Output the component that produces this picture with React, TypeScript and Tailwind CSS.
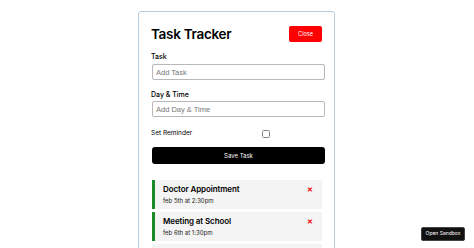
import React from 'react';

interface Task {
  id: number;
  text: string;
  day: string;
}

const tasks: Task[] = [
  { id: 1, text: 'Doctor Appointment', day: 'feb 5th at 2:30pm' },
  { id: 2, text: 'Meeting at School', day: 'feb 6th at 1:30pm' },
];

const font = { fontFamily: 'Inter, "Open Sans", sans-serif' };

export default function App() {
  return (
    <div className="relative w-[474px] h-[248px] overflow-hidden bg-white" style={font}>
      <div className="ml-[138px] mt-[11px] w-[197px] border border-[#b9cde0] rounded-[3px] px-[12px] pt-[14px] pb-4">
        {/* Header */}
        <div className="flex items-center justify-between h-[16px]">
          <h1 className="text-[13.5px] leading-[16px] font-semibold text-black tracking-[-0.3px]">Task Tracker</h1>
          <button className="w-[33px] h-[16px] bg-[#ff0000] text-white text-[5.5px] rounded-[2px]">Close</button>
        </div>

        {/* Form */}
        <div className="mt-[11px]">
          <label className="block text-[7px] leading-[8px] font-medium text-black">Task</label>
          <input
            placeholder="Add Task"
            className="block mt-[3px] ml-[1px] w-[173px] h-[16px] border border-[#b8b8b8] rounded-[2px] px-[3px] text-[7.5px] placeholder:text-[#777]"
            style={{ fontFamily: '"Liberation Sans", Arial, sans-serif' }}
          />
        </div>
        <div className="mt-[11px]">
          <label className="block text-[7px] leading-[8px] font-medium text-black">Day &amp; Time</label>
          <input
            placeholder="Add Day & Time"
            className="block mt-[2px] ml-[1px] w-[173px] h-[16px] border border-[#b8b8b8] rounded-[2px] px-[3px] text-[7.5px] placeholder:text-[#777]"
            style={{ fontFamily: '"Liberation Sans", Arial, sans-serif' }}
          />
        </div>
        <div className="mt-[13px] flex items-center h-[8px]">
          <label className="flex-1 text-[6.5px] text-black">Set Reminder</label>
          <div className="flex-[2] flex justify-center">
            <span className="block w-[8px] h-[8px] border border-[#888] rounded-[1.5px] ml-[2px]" />
          </div>
        </div>
        <button className="block mt-[9px] ml-[1px] w-[173px] h-[17px] bg-black text-white text-[6px] rounded-[3px]">
          Save Task
        </button>

        {/* Tasks */}
        <div className="mt-[16px] flex flex-col gap-[3px]">
          {tasks.map((t) => (
            <div key={t.id} className="flex justify-between bg-[#f4f4f4] border-l-[3px] border-[#1d8a2a] ml-[1px] h-[29px] pl-[8px] pr-[8px] pt-[4px]">
              <div>
                <h3 className="text-[8px] leading-[11px] font-semibold text-black tracking-[-0.1px]">{t.text}</h3>
                <p className="text-[6px] leading-[10px] text-[#222] mt-[1px]">{t.day}</p>
              </div>
              <span className="text-[#e00] text-[7px] leading-[11px] font-black pr-[1px]">✕</span>
            </div>
          ))}
          <div className="bg-[#f4f4f4] ml-[1px] h-[29px]" />
        </div>
      </div>

      <button className="absolute left-[421px] top-[227px] w-[44px] h-[14px] bg-[#111] text-white text-[5px] rounded-[2px] border border-[#444]">
        Open Sandbox
      </button>
    </div>
  );
}
